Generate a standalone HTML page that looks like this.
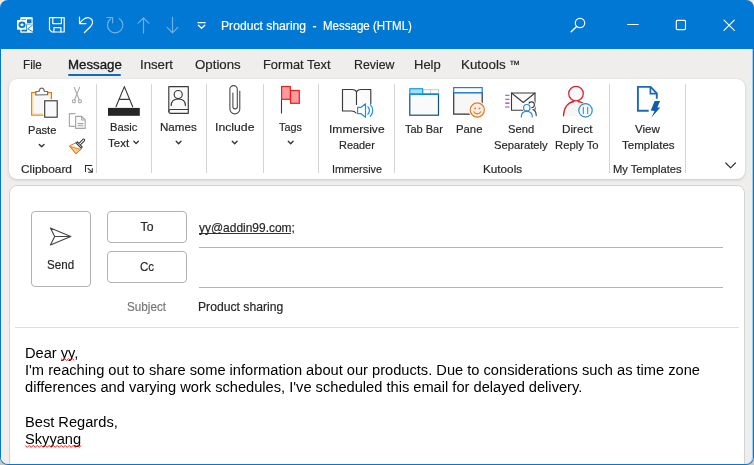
<!DOCTYPE html>
<html lang="en">
<head>
<meta charset="utf-8">
<title>Product sharing - Message (HTML)</title>
<style>
html,body{margin:0;padding:0;}
body{width:754px;height:465px;overflow:hidden;background:linear-gradient(#efe9df 0,#efe9df 50%,#c9c9c9 50%,#c9c9c9 100%);font-family:"Liberation Sans",sans-serif;position:relative;}
#win{position:absolute;left:0;top:0;width:754px;height:465px;border-radius:8px;background:#0078d4;overflow:hidden;}
#client{position:absolute;left:1px;top:49px;width:752px;height:415px;background:#efeeed;box-shadow:inset 1px 0 0 #fbf1e7,inset -1px 0 0 #a5c9e6;border-radius:0 0 7px 7px;overflow:hidden;}
#ribbon{position:absolute;left:8px;top:30px;width:736px;height:100px;background:#fff;border-radius:8px;box-shadow:0 1px 3px rgba(0,0,0,.16),0 0 1px rgba(0,0,0,.10);}
#panel{position:absolute;left:8px;top:136px;width:736px;height:300px;background:#fff;border-radius:8px 8px 0 0;border:1px solid #d4d4d4;box-sizing:border-box;}
.sep{position:absolute;top:84px;width:1px;height:89px;background:#d4d4d4;}
.tabline{position:absolute;left:68px;top:73.5px;width:53px;height:2.5px;background:#0f6cbd;border-radius:1.5px;}
.btn{position:absolute;box-sizing:border-box;border:1px solid #b3b3b3;border-radius:4px;background:#fff;}
.hl{position:absolute;height:1px;background:#b4b4b4;}
.t{position:absolute;white-space:pre;line-height:1;transform-origin:0 0;-webkit-text-stroke:0.18px currentColor;}
#tx{position:absolute;left:0;top:0;width:754px;height:465px;will-change:transform;}
svg{position:absolute;left:0;top:0;}
</style>
</head>
<body>
<div id="win">
<div id="client">
<div id="ribbon"></div>
<div id="panel"></div>
</div>
<div class="tabline"></div>
<div class="sep" style="left:96px"></div>
<div class="sep" style="left:151px"></div>
<div class="sep" style="left:206px"></div>
<div class="sep" style="left:263px"></div>
<div class="sep" style="left:318px"></div>
<div class="sep" style="left:394px"></div>
<div class="sep" style="left:609px"></div>
<div class="sep" style="left:685px"></div>
<div class="btn" style="left:31px;top:211px;width:60px;height:76px"></div>
<div class="btn" style="left:107px;top:211px;width:80px;height:32px"></div>
<div class="btn" style="left:107px;top:251px;width:80px;height:32px"></div>
<div class="hl" style="left:199px;top:233px;width:92px;background:#333"></div>
<div class="hl" style="left:199px;top:247px;width:524px"></div>
<div class="hl" style="left:199px;top:287px;width:524px"></div>
<div class="hl" style="left:15px;top:327px;width:724px;background:#dedede"></div>
<div id="tx">
<span class="t" style="left:221.49px;top:19.71px;font-size:12.3px;color:#fff;transform:scaleX(0.9882);">Product sharing</span>
<span class="t" style="left:312.50px;top:19.71px;font-size:12.3px;color:#fff;">-</span>
<span class="t" style="left:322.75px;top:19.71px;font-size:12.3px;color:#fff;transform:scaleX(0.9363);">Message (HTML)</span>
<span class="t" style="left:23.14px;top:58.81px;font-size:12.6px;color:#262626;transform:scaleX(0.9287);">File</span>
<span class="t" style="left:67.91px;top:58.81px;font-size:12.6px;color:#1a1a1a;-webkit-text-stroke:0.35px #1a1a1a;transform:scaleX(1.0541);">Message</span>
<span class="t" style="left:139.79px;top:58.81px;font-size:12.6px;color:#262626;transform:scaleX(1.0486);">Insert</span>
<span class="t" style="left:194.81px;top:58.81px;font-size:12.6px;color:#262626;transform:scaleX(1.0535);">Options</span>
<span class="t" style="left:262.65px;top:58.81px;font-size:12.6px;color:#262626;transform:scaleX(1.0195);">Format Text</span>
<span class="t" style="left:354.06px;top:58.81px;font-size:12.6px;color:#262626;transform:scaleX(0.9777);">Review</span>
<span class="t" style="left:413.64px;top:58.81px;font-size:12.6px;color:#262626;transform:scaleX(1.0320);">Help</span>
<span class="t" style="left:461.22px;top:58.81px;font-size:12.6px;color:#262626;transform:scaleX(1.0611);">Kutools</span>
<span class="t" style="left:509.23px;top:59.10px;font-size:10.6px;color:#262626;">™</span>
<span class="t" style="left:28.45px;top:124.60px;font-size:11.8px;color:#262626;transform:scaleX(0.9387);">Paste</span>
<span class="t" style="left:20.74px;top:164.21px;font-size:11px;color:#262626;transform:scaleX(1.0832);">Clipboard</span>
<span class="t" style="left:110.31px;top:121.81px;font-size:11.8px;color:#262626;transform:scaleX(0.9452);">Basic</span>
<span class="t" style="left:107.54px;top:137.71px;font-size:11.8px;color:#262626;transform:scaleX(0.9741);">Text</span>
<span class="t" style="left:159.90px;top:121.81px;font-size:11.8px;color:#262626;transform:scaleX(0.9814);">Names</span>
<span class="t" style="left:214.62px;top:121.81px;font-size:11.8px;color:#262626;transform:scaleX(1.0364);">Include</span>
<span class="t" style="left:279.43px;top:121.81px;font-size:11.8px;color:#262626;transform:scaleX(0.9164);">Tags</span>
<span class="t" style="left:329.45px;top:124.01px;font-size:11.8px;color:#262626;transform:scaleX(1.0219);">Immersive</span>
<span class="t" style="left:339.36px;top:140.01px;font-size:11.8px;color:#262626;transform:scaleX(0.9258);">Reader</span>
<span class="t" style="left:331.68px;top:164.21px;font-size:11px;color:#262626;transform:scaleX(0.9856);">Immersive</span>
<span class="t" style="left:404.71px;top:124.01px;font-size:11.8px;color:#262626;transform:scaleX(0.9322);">Tab Bar</span>
<span class="t" style="left:456.27px;top:124.01px;font-size:11.8px;color:#262626;transform:scaleX(0.9615);">Pane</span>
<span class="t" style="left:507.85px;top:124.01px;font-size:11.8px;color:#262626;transform:scaleX(0.9470);">Send</span>
<span class="t" style="left:493.80px;top:140.01px;font-size:11.8px;color:#262626;transform:scaleX(0.9528);">Separately</span>
<span class="t" style="left:561.74px;top:124.01px;font-size:11.8px;color:#262626;transform:scaleX(0.9917);">Direct</span>
<span class="t" style="left:555.07px;top:140.01px;font-size:11.8px;color:#262626;transform:scaleX(0.9543);">Reply To</span>
<span class="t" style="left:482.67px;top:164.21px;font-size:11px;color:#262626;transform:scaleX(1.0658);">Kutools</span>
<span class="t" style="left:635.34px;top:124.01px;font-size:11.8px;color:#262626;transform:scaleX(0.9803);">View</span>
<span class="t" style="left:622.29px;top:140.01px;font-size:11.8px;color:#262626;transform:scaleX(0.9784);">Templates</span>
<span class="t" style="left:612.59px;top:164.21px;font-size:11px;color:#262626;transform:scaleX(1.0134);">My Templates</span>
<span class="t" style="left:46.97px;top:259.41px;font-size:12.2px;color:#262626;transform:scaleX(0.9515);">Send</span>
<span class="t" style="left:140.60px;top:221.21px;font-size:12.2px;color:#262626;">To</span>
<span class="t" style="left:140.20px;top:261.21px;font-size:12.2px;color:#262626;transform:scaleX(0.9499);">Cc</span>
<span class="t" style="left:198.99px;top:222.21px;font-size:12.2px;color:#262626;transform:scaleX(0.9811);">yy@addin99.com;</span>
<span class="t" style="left:126.83px;top:301.02px;font-size:12.2px;color:#767676;transform:scaleX(0.9587);">Subject</span>
<span class="t" style="left:197.90px;top:301.02px;font-size:12.2px;color:#262626;transform:scaleX(0.9990);">Product sharing</span>
<span class="t" style="left:25.00px;top:345.70px;font-size:14.65px;color:#000;-webkit-text-stroke:0;">Dear yy,</span>
<span class="t" style="left:25.00px;top:363.01px;font-size:14.65px;color:#000;-webkit-text-stroke:0;">I&#x27;m reaching out to share some information about our products. Due to considerations such as time zone</span>
<span class="t" style="left:25.00px;top:380.20px;font-size:14.65px;color:#000;-webkit-text-stroke:0;">differences and varying work schedules, I&#x27;ve scheduled this email for delayed delivery.</span>
<span class="t" style="left:25.00px;top:414.81px;font-size:14.65px;color:#000;-webkit-text-stroke:0;">Best Regards,</span>
<span class="t" style="left:25.00px;top:432.20px;font-size:14.65px;color:#000;-webkit-text-stroke:0;">Skyyang</span>
</div>
<svg width="754" height="465" viewBox="0 0 754 465" fill="none" stroke-linecap="round" stroke-linejoin="round">
<!-- ===== title bar ===== -->
<g stroke="#fff" stroke-width="1.2">
<!-- outlook -->
<rect x="20.9" y="17.9" width="11.2" height="14.3" fill="none" stroke-width="1.2"/>
<path d="M20.9 18.4h11.2" stroke-width="1.8" stroke-linecap="butt"/>
<path d="M26.5 18v5.8h5.6" stroke-width="1"/>
<rect x="27" y="24.6" width="5.7" height="7.4" fill="#fff" stroke="none"/>
<path d="M32.3 25.3l-4.6 3.6 4.600 2.500" stroke="#0078d4" stroke-width=".9"/>
<rect x="17" y="20" width="9.300" height="9.700" fill="#fff" stroke="none"/>
<ellipse cx="22" cy="24.800" rx="2.600" ry="2.300" stroke="#0078d4" stroke-width="1.900" fill="#fff"/>
<!-- save -->
<path d="M49.5 17.6h14.7v14.4h-12.3l-2.4-2.4z"/>
<path d="M52.8 17.8v5.8h8.6v-5.8M53.9 32v-4.4h7v4.4"/>
<!-- undo -->
<path d="M79.5 17.2v6.400h6.400"/>
<path d="M79.800 23.400C82.300 19.300 86.500 16.800 89.600 18C93.200 19.400 93.600 23.400 90.600 26.500L84.300 32.700"/>
<!-- customize -->
<path d="M198 22.6h7.2M198.4 25.2l3.2 3 3.2-3" stroke-width="1.3"/>
<!-- search -->
<circle cx="580" cy="23" r="4.7"/>
<path d="M576.6 26.6l-5.4 5.2" stroke-width="1.4"/>
<!-- window controls -->
<path d="M627.6 24.5h10.6" stroke-width="1.1"/>
<rect x="676.3" y="20.4" width="9.2" height="9.2" rx="1" stroke-width="1.1"/>
<path d="M724 20.1l10.3 10.3M734.3 20.1L724 30.4" stroke-width="1.1"/>
</g>
<g stroke="#fff" stroke-opacity=".42" stroke-width="1.2">
<!-- redo -->
<path d="M107 17.500h5.600v5.300"/>
<path d="M119.400 18.700A7.700 7.700 0 1 1 110.800 18.800"/>
<!-- up -->
<path d="M143.5 18v15M138.2 23.2l5.3-5.4 5.3 5.4"/>
<!-- down -->
<path d="M172.5 17.4v15M167.2 27.4l5.3 5.4 5.3-5.4"/>
</g>

<!-- ===== ribbon ===== -->
<!-- paste -->
<rect x="31.700" y="92.600" width="19.700" height="22.500" fill="#f8f8f8" stroke="#e07a0a" stroke-width="1.200" stroke-linejoin="miter"/>
<rect x="32.900" y="93.800" width="17.300" height="20.100" fill="none" stroke="#fbdc9a" stroke-width="1.100" stroke-linejoin="miter"/>
<path d="M35.800 95v-3.500h3.200c.3-2.200 1.400-3.400 2.700-3.400s2.400 1.200 2.700 3.400h3.200v3.200z" fill="#fff" stroke="#6e6e6e" stroke-width="1.200"/>
<rect x="43.200" y="99.300" width="15.400" height="16.500" fill="#fff" stroke="none"/>
<rect x="44.700" y="100.800" width="12.500" height="16.400" fill="#fafafa" stroke="#333" stroke-width="1.100" stroke-linejoin="miter"/>
<path d="M39.250 144.400l2.400 2.400 2.400-2.400" stroke="#333" stroke-width="1.350"/>
<!-- cut (disabled) -->
<g stroke="#a6a6a6" stroke-width="1.100">
<path d="M74.200 87.400l5 12.300M79.600 87.400l-5 12.300"/>
<circle cx="73.900" cy="101.300" r="1.600"/><circle cx="79.900" cy="101.300" r="1.600"/>
</g>
<!-- copy (disabled) -->
<g stroke="#a6a6a6" stroke-width="1.100" fill="#fff">
<path d="M75 126.400h-5.600v-12.800h5.600"/>
<path d="M75.600 116.400h6l3.600 3.600v8.400h-9.600z" fill="#fafafa"/>
<path d="M81.600 116.600v3.400h3.400M78 123.600h5M78 125.800h5" fill="none"/>
</g>
<!-- format painter -->
<path d="M75.600 142.900L69.300 146L76.100 153.800L81.300 149z" fill="#fbfbfb" stroke="#e5780f" stroke-width="1"/>
<path d="M70.900 146.700L80.800 149.400L76.100 153.500z" fill="#f9cf8a" stroke="#e07008" stroke-width=".850"/>
<path d="M79.900 143.900L83.700 140.100" stroke="#333" stroke-width="3"/>
<path d="M76.300 142L82 147.900" stroke="#333" stroke-width="2.600" stroke-linecap="butt"/>
<path d="M79.900 143.900L83.700 140.100" stroke="#fff" stroke-width="1.100"/>
<path d="M76.900 142.600L81.400 147.300" stroke="#fff" stroke-width=".8" stroke-linecap="butt"/>
<!-- clipboard launcher -->
<path d="M85.500 172v-6.500h6.700M87.700 168.200l4.400 4M92.300 168.300v4h-4.200" stroke="#2a2a2a" stroke-width="1.050" stroke-linecap="butt" stroke-linejoin="miter"/>

<!-- basic text -->
<path d="M116 106.800l8.350-20.200 8.350 20.200M119.500 99.400h9.700" stroke="#3a3a3a" stroke-width="1.150"/>
<rect x="108" y="107.900" width="31.800" height="7.900" fill="#262626"/>
<path d="M133.900 141.300l2.200 2.300 2.200-2.300" stroke="#333" stroke-width="1.350"/>

<!-- names -->
<g stroke="#3a3a3a" stroke-width="1.150">
<path d="M168.800 86.600h19.500v26.700h-17.700a1.800 1.800 0 0 1-1.800-1.800z" fill="#fafafa"/>
<path d="M168.800 111.400a1.900 1.900 0 0 1 1.900-1.900h17.600"/>
<circle cx="178.200" cy="94.600" r="4.050"/>
<path d="M171.200 105.600c0-4.800 3.200-6.600 7.100-6.600s7.100 1.800 7.100 6.600"/>
</g>
<path d="M176.200 141.300l2.400 2.400 2.400-2.400" stroke="#333" stroke-width="1.350"/>

<!-- include (paperclip) -->
<path d="M232.900 93V106.700a2.200 2.200 0 0 0 4.400 0V89.300a3.700 3.700 0 0 0-7.400 0V108.900a4.950 4.950 0 0 0 9.900 0V91" stroke="#4a4a4a" stroke-width="1.100"/>
<path d="M232.300 141.300l2.400 2.400 2.400-2.400" stroke="#333" stroke-width="1.350"/>

<!-- tags -->
<rect x="281.600" y="86.500" width="8.700" height="12.800" fill="#ff9aa0" stroke="#e2231a" stroke-width="1.200" stroke-linejoin="miter"/>
<rect x="290.600" y="90.500" width="8.700" height="12.800" fill="#ff9aa0" stroke="#e2231a" stroke-width="1.200" stroke-linejoin="miter"/>
<path d="M281.500 99.900v13.600" stroke="#3a3a3a" stroke-width="1.100" stroke-linecap="butt"/>
<path d="M288.300 141.300l2.400 2.400 2.400-2.400" stroke="#333" stroke-width="1.350"/>

<!-- immersive reader -->
<g stroke="#3a3a3a" stroke-width="1.150">
<path d="M356.500 91.600C355.600 90.100 354 89.500 352 89.500H342.500V111H351.500C353.500 111 355 111.600 356 113" fill="#fafafa"/>
<path d="M356.500 91.600C357.400 90.100 359 89.500 361 89.500H370.800V103.500" fill="#fafafa"/>
<path d="M356.500 91.600V104.500"/>
</g>
<g stroke="#1e8fdd" stroke-width="1.200">
<path d="M357.600 107.400h3.200l4.700-3.600v13.400l-4.700-3.600h-3.200z" fill="#fff"/>
<path d="M367.800 106.800a5 5 0 0 1 0 7.400M370.300 104.600a8.400 8.400 0 0 1 0 11.800"/>
</g>

<!-- tab bar -->
<rect x="423" y="89.700" width="15.600" height="4.300" fill="#fff" stroke="#b8cdd8" stroke-width="1" stroke-linejoin="miter"/>
<path d="M430.600 89.700v4" stroke="#b8cdd8" stroke-width="1" stroke-linecap="butt"/>
<rect x="409.800" y="94.300" width="28.700" height="20.900" fill="#fafafa" stroke="#0f5275" stroke-width="1.200" stroke-linejoin="miter"/>
<rect x="409.800" y="88.700" width="12.800" height="5.300" fill="#a8dcf7" stroke="#12a0ea" stroke-width="1.200" stroke-linejoin="miter"/>
<path d="M409.200 94h29.900" stroke="#12a0ea" stroke-width="1.200" stroke-linecap="butt"/>

<!-- pane -->
<path d="M453.700 92.700V114.100H482.200V92.700z" fill="#f7f7f7" stroke="#333" stroke-width="1.200" stroke-linejoin="miter"/>
<rect x="453.700" y="87.600" width="28.500" height="5.100" fill="#fff" stroke="#1a7fd4" stroke-width="1.200" stroke-linejoin="miter"/>
<circle cx="477.300" cy="110" r="8.900" fill="#fff" stroke="none"/>
<circle cx="477.300" cy="110" r="7.100" fill="#fbeee4" stroke="#e07a28" stroke-width="1.200"/>
<circle cx="475.200" cy="108.400" r=".95" fill="#e07a28" stroke="none"/><circle cx="479.500" cy="108.400" r=".95" fill="#e07a28" stroke="none"/>
<path d="M473.800 111.800a4 4 0 0 0 7 0" stroke="#e07a28" stroke-width="1.050"/>

<!-- send separately -->
<rect x="511.500" y="93" width="23.500" height="17.300" fill="#fafafa" stroke="#3a3a3a" stroke-width="1.100"/>
<path d="M511.500 93l11.750 9.500 11.750-9.500" stroke="#3a3a3a" stroke-width="1.100"/>
<path d="M505.200 95.300h4.300M505.200 99.200h4.300M505.200 103.100h4.300M505.200 107h4.300" stroke="#9a3fb0" stroke-width="1.050" stroke-linecap="butt"/>
<circle cx="531.500" cy="104.800" r="3" fill="#fff" stroke="#fff" stroke-width="3"/>
<path d="M525 117c0-4 2.500-7 6.500-7s5.500 3 5.500 7z" fill="#fff" stroke="#fff" stroke-width="2.500"/>
<circle cx="531.500" cy="104.800" r="2.900" fill="#fff" stroke="#3a3a3a" stroke-width="1.100"/>
<path d="M533 109.600c2 .6 3.200 2.800 3.200 6" stroke="#3a3a3a" stroke-width="1.100"/>
<circle cx="526.800" cy="107.700" r="3.300" fill="#fff" stroke="#fff" stroke-width="2.600"/>
<circle cx="526.800" cy="107.700" r="3.200" fill="#fff" stroke="#2b88d8" stroke-width="1.200"/>
<path d="M521.300 117c0-3.800 2.300-5.600 5.500-5.600s5.500 1.800 5.500 5.600" fill="#fff" stroke="#2b88d8" stroke-width="1.200"/>

<!-- direct reply to -->
<path d="M563.500 115.800c.3-8 4.300-13.400 10.300-14.300h4.400c2.500.3 4.800 1.300 6.400 2.800v11.500z" fill="#f6f6f6" stroke="none"/>
<circle cx="576" cy="93.600" r="7.300" fill="#f9f9f9" stroke="#d9262e" stroke-width="1.300"/>
<path d="M563.500 115.800c.3-8 4.300-13.400 10.300-14.300" stroke="#d9262e" stroke-width="1.300"/>
<path d="M578.200 101.500c2.500.3 4.500 1.200 6 2.600" stroke="#d9262e" stroke-width="1.300"/>
<circle cx="585.500" cy="110.400" r="8" fill="#fff"/>
<circle cx="585.500" cy="110.400" r="6.700" fill="#f7fbfe" stroke="#2b88d8" stroke-width="1.200"/>
<path d="M583.300 107.300v6.300M587.700 107.300v6.300" stroke="#2b88d8" stroke-width="1.050"/>

<!-- view templates -->
<path d="M648.700 110.800H637.900V86.900H650.600L656.800 93.400V98.800" stroke="#1b69bd" stroke-width="1.900" stroke-linecap="butt" stroke-linejoin="miter"/>
<path d="M650.400 86.900V93.600H656.800" stroke="#1b69bd" stroke-width="1.700" stroke-linecap="butt" stroke-linejoin="miter"/>
<path d="M654.700 101.100H660.100L657.300 107.400L660.300 107.600L651.200 117.700L654.600 110.900L650.700 110.500z" fill="#0f5cb0" stroke="none"/>

<!-- collapse chevron -->
<path d="M725.800 163l4.800 4.800 4.800-4.800" stroke="#333" stroke-width="1.200"/>

<!-- ===== send icon ===== -->
<path d="M50.400 228l20.400 8.500-20.400 8.500 4.300-8.500zM54.700 236.500h16" stroke="#444" stroke-width="1.100"/>

<!-- spelling squiggles -->
<path d="M61.0 358.7L62.9 360.5L64.8 358.7L66.7 360.5L68.6 358.7L70.5 360.5L72.4 358.7L74.3 360.5" stroke="#f01818" stroke-width="1" stroke-linecap="butt"/>
<path d="M25.2 445.4L27.2 447.4L29.2 445.4L31.2 447.4L33.2 445.4L35.2 447.4L37.2 445.4L39.2 447.4L41.2 445.4L43.2 447.4L45.2 445.4L47.2 447.4L49.2 445.4L51.2 447.4L53.2 445.4L55.2 447.4L57.2 445.4L59.2 447.4L61.2 445.4L63.2 447.4L65.2 445.4L67.2 447.4L69.2 445.4L71.2 447.4L73.2 445.4L75.2 447.4L77.2 445.4L79.2 447.4L81.2 445.4" stroke="#f01818" stroke-width="1" stroke-linecap="butt"/>

</svg>
</div>
</body>
</html>
